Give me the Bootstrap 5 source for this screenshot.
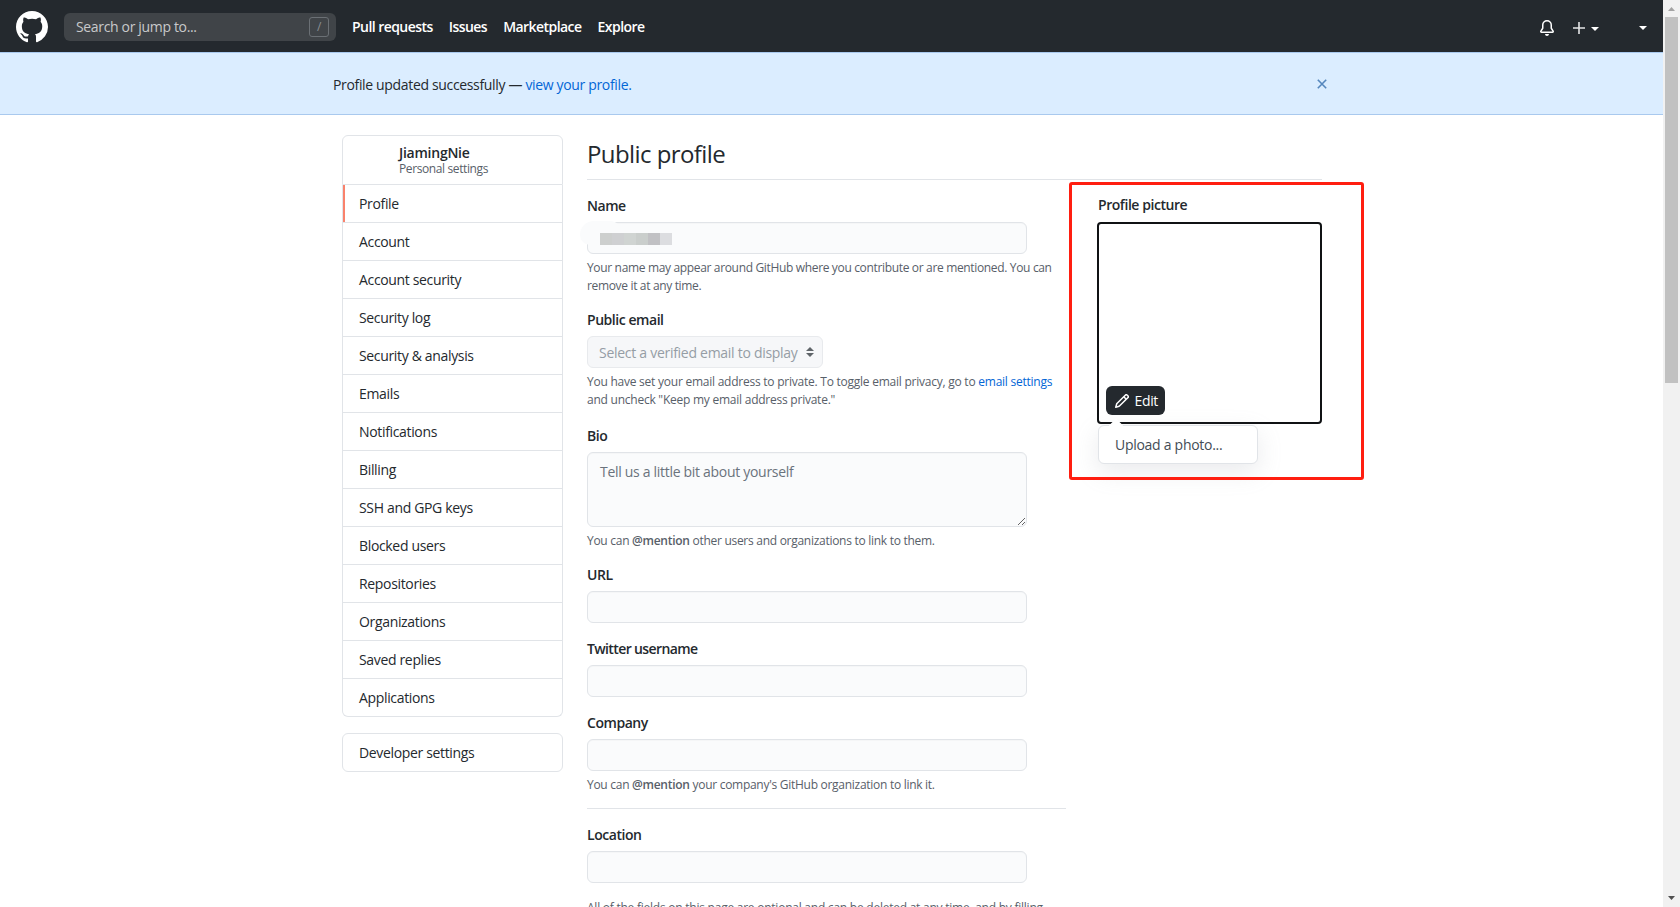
<!DOCTYPE html>
<html lang="en">
<head>
<meta charset="utf-8">
<meta name="viewport" content="width=device-width, initial-scale=1">
<title>Your Profile</title>
<link href="https://cdn.jsdelivr.net/npm/bootstrap@5.3.0/dist/css/bootstrap.min.css" rel="stylesheet">
<style>
  body { font-family: "Open Sans", "Noto Sans", sans-serif; font-size: 14px; line-height: 21px; color: #24292e; height: 100vh; letter-spacing: -.34px; }
  svg { display: block; }
  a { text-decoration: none; color: #0366d6; }
  .viewport { width: 1663px; height: 100vh; }
  .topbar { background: #24292e; height: 52px; padding: 0 16px; }
  .logo { margin-top: 2px; }
  .search-box { width: 272px; height: 28px; margin: 2px 16px 0; padding: 0 7px 0 12px; background: #404448; border-radius: 6px; color: #c8c9cb; }
  .search-box .prompt-text { margin-top: -2px; }
  .slash-key { width: 20px; height: 20px; border: 1px solid #6b7075; border-radius: 3px; color: #8b8f93; font-size: 12px; line-height: 18px; }
  .topbar .nav-link { color: #fff; font-weight: 600; padding: 0; letter-spacing: -.55px; }
  .topbar .tools { margin-top: 4px; }
  .tri { width: 0; height: 0; border: 4px solid transparent; border-bottom: 0; border-top-color: #fff; }
  .tri.create { margin: 2px 40px 0 4px; }
  .flash-note { height: 63px; background: #dbedff; border: solid #a9c9ee; border-width: 1px 0; padding: 1px 336px 0 333px; }
  .page { padding: 20px 341px 0 342px; }
  .side { width: 221px; margin-right: 24px; }
  .side .list-group { --bs-list-group-border-color: #e1e4e8; --bs-list-group-border-radius: 6px; --bs-list-group-color: #24292e; }
  .side .list-group-item { height: 38px; padding: 9px 16px 7px; line-height: 20px; }
  .side .list-group-item:first-child { height: 50px; padding: 7px 16px 0 56px; }
  .side .list-group.solo .list-group-item { height: 39px; padding: 9px 16px 7px; }
  .side .who { font-weight: 600; line-height: 20px; letter-spacing: -.25px; }
  .side .kind { font-size: 12px; line-height: 12px; color: #586069; letter-spacing: -.39px; }
  .side .current { box-shadow: inset 2px 0 #f9826c; }
  .main-title { font-size: 24px; line-height: 36px; font-weight: 400; height: 45px; padding-top: 1px; border-bottom: 1px solid #e1e4e8; letter-spacing: -.58px; }
  .fields { width: 479px; padding-top: 15px; }
  .fields .form-label, .photo .form-label { display: block; font-weight: 600; margin: 0 0 6px; letter-spacing: -.45px; }
  .fields .form-label.snug { letter-spacing: -.62px; }
  .fields .form-control { width: 440px; height: 32px; background: #fafbfc; border: 1px solid #e1e4e8; border-radius: 6px; padding: 4px 12px; font-size: 14px; line-height: 21px; letter-spacing: -.3px; box-shadow: inset 0 1px 0 rgba(225,228,232,.2); }
  .fields textarea.form-control { height: 75px; min-height: 0; padding-top: 8px; resize: vertical; }
  .fields .form-control::placeholder { color: #6a737d; opacity: 1; }
  .hint { font-size: 12px; line-height: 18px; color: #586069; margin-top: 4px; padding-top: 1px; height: 18px; white-space: nowrap; letter-spacing: -.28px; }
  .hint.two { height: 36px; }
  .hint.tight { letter-spacing: -.34px; }
  .hint.loose { letter-spacing: -.24px; }
  .field { margin-bottom: 15px; }
  .email-pick { width: 236px; height: 32px; background: #f6f7f9; border: 1px solid #e8eaed; border-radius: 6px; padding: 0 8px 0 11px; color: #959da5; }
  .email-pick span { letter-spacing: -.28px; }
  .smudge { left: -7px; top: -1px; width: 42px; height: 24px; background: #fafbfc; border-radius: 14px 12px 10px 10px; }
  .blocks { left: 13px; top: 11px; }
  .blocks i { width: 12px; height: 12px; }
  .rule { height: 1px; background: #e1e4e8; margin-bottom: 15px; }
  .photo { width: 225px; padding-top: 14px; }
  .photo .form-label { padding-left: 1px; margin-bottom: 7px; }
  .frame { height: 202px; border: 2px solid #101214; border-radius: 4px; }
  .edit-btn { left: 7px; bottom: 7px; width: 59px; height: 29px; background: #24292e; color: #fff; border-radius: 6px; padding: 0 7px 0 9px; }
  .upload-menu { left: -1px; top: 201px; width: 160px; height: 39px; background: #fff; border: 1px solid #e1e4e8; border-radius: 6px; padding: 9px 16px; line-height: 20px; color: #444d56; box-shadow: 0 8px 24px rgba(149,157,165,.2); letter-spacing: -.28px; }
  .upload-menu svg { left: 10px; top: -8px; }
  .callout-box { left: 1069px; top: 182px; width: 295px; height: 298px; border: 3px solid #ff1e10; border-radius: 3px; pointer-events: none; }
  .scroller { width: 17px; background: #f1f1f1; padding: 7px 0; }
  .scroller .thumb { width: 13px; height: 366px; margin-top: 6px; background: #c1c1c1; }
</style>
</head>
<body class="d-flex overflow-hidden position-relative bg-white">
<div class="viewport overflow-hidden flex-shrink-0">
  <header class="topbar d-flex align-items-center">
    <svg class="logo" width="32" height="32" viewBox="0 0 16 16" fill="#fff"><path fill-rule="evenodd" d="M8 0C3.58 0 0 3.58 0 8c0 3.54 2.29 6.53 5.47 7.59.4.07.55-.17.55-.38 0-.19-.01-.82-.01-1.49-2.01.37-2.53-.49-2.69-.94-.09-.23-.48-.94-.82-1.13-.28-.15-.68-.52-.01-.53.63-.01 1.08.58 1.23.82.72 1.21 1.87.87 2.33.66.07-.52.28-.87.51-1.07-1.78-.2-3.64-.89-3.64-3.95 0-.87.31-1.59.82-2.15-.08-.2-.36-1.02.08-2.12 0 0 .67-.21 2.2.82.64-.18 1.32-.27 2-.27s1.36.09 2 .27c1.53-1.04 2.2-.82 2.2-.82.44 1.1.16 1.92.08 2.12.51.56.82 1.27.82 2.15 0 3.07-1.87 3.75-3.65 3.95.29.25.54.73.54 1.48 0 1.07-.01 1.93-.01 2.2 0 .21.15.46.55.38A8.01 8.01 0 0 0 16 8c0-4.42-3.58-8-8-8z"/></svg>
    <div class="search-box d-flex align-items-center justify-content-between"><span class="prompt-text">Search or jump to...</span><span class="slash-key text-center">/</span></div>
    <nav class="nav gap-3">
      <a class="nav-link" href="#">Pull requests</a><a class="nav-link" href="#">Issues</a><a class="nav-link" href="#">Marketplace</a><a class="nav-link" href="#">Explore</a>
    </nav>
    <div class="tools d-flex align-items-center ms-auto">
      <svg width="16" height="16" viewBox="0 0 16 16" fill="#fff"><path d="M8 16a2 2 0 0 0 1.985-1.75c.017-.137-.097-.25-.235-.25h-3.5c-.138 0-.252.113-.235.25A2 2 0 0 0 8 16z"/><path fill-rule="evenodd" d="M8 1.5A3.5 3.5 0 0 0 4.500 5v2.947c0 .346-.102.683-.294.97l-1.703 2.556a.018.018 0 0 0-.003.01l.001.006c0 .002.002.004.004.006a.017.017 0 0 0 .006.004l.007.001h10.964l.007-.001a.016.016 0 0 0 .006-.004.016.016 0 0 0 .004-.006l.001-.007a.017.017 0 0 0-.003-.01l-1.703-2.554a1.75 1.75 0 0 1-.294-.97V5A3.500 3.500 0 0 0 8 1.500zM3 5a5 5 0 0 1 10 0v2.947c0 .05.015.098.042.139l1.703 2.555A1.518 1.518 0 0 1 13.482 13H2.518a1.518 1.518 0 0 1-1.263-2.360l1.703-2.554A.25.25 0 0 0 3 7.947V5z"/></svg>
      <svg class="ms-3" width="16" height="16" viewBox="0 0 16 16"><path d="M8 2v12M2 8h12" stroke="#e4e5e6" stroke-width="1.6"/></svg>
      <span class="tri create"></span>
      <span class="tri"></span>
    </div>
  </header>
  <div class="flash-note d-flex align-items-center justify-content-between">
    <span>Profile updated successfully — <a href="#">view your profile.</a></span>
    <svg width="10" height="10" viewBox="0 0 10 10"><path d="M.8.8l8.400 8.400M9.200.8L.8 9.200" stroke="#5587bd" stroke-width="1.600"/></svg>
  </div>
  <div class="page d-flex align-items-start">
    <aside class="side flex-shrink-0">
      <div class="list-group">
        <div class="list-group-item"><div class="who">JiamingNie</div><div class="kind">Personal settings</div></div>
        <a class="list-group-item current" href="#">Profile</a>
        <a class="list-group-item" href="#">Account</a>
        <a class="list-group-item" href="#">Account security</a>
        <a class="list-group-item" href="#">Security log</a>
        <a class="list-group-item" href="#">Security &amp; analysis</a>
        <a class="list-group-item" href="#">Emails</a>
        <a class="list-group-item" href="#">Notifications</a>
        <a class="list-group-item" href="#">Billing</a>
        <a class="list-group-item" href="#">SSH and GPG keys</a>
        <a class="list-group-item" href="#">Blocked users</a>
        <a class="list-group-item" href="#">Repositories</a>
        <a class="list-group-item" href="#">Organizations</a>
        <a class="list-group-item" href="#">Saved replies</a>
        <a class="list-group-item" href="#">Applications</a>
      </div>
      <div class="list-group solo mt-3"><a class="list-group-item" href="#">Developer settings</a></div>
    </aside>
    <main class="flex-grow-1">
      <h1 class="main-title mb-0">Public profile</h1>
      <div class="d-flex justify-content-between align-items-start">
        <form class="fields">
          <div class="field">
            <label class="form-label">Name</label>
            <div class="position-relative">
              <input class="form-control" type="text">
              <div class="smudge position-absolute"></div>
              <div class="blocks position-absolute d-flex">
                <i style="background:#cdcfce"></i><i style="background:#cfd0d2"></i><i style="background:#d0d4d2"></i><i style="background:#cacecc"></i><i style="background:#c1c1c4"></i><i style="background:#dcdde0"></i>
              </div>
            </div>
            <div class="hint two tight">Your name may appear around GitHub where you contribute or are mentioned. You can<br>remove it at any time.</div>
          </div>
          <div class="field" style="margin-bottom:17px">
            <label class="form-label">Public email</label>
            <div class="email-pick d-flex align-items-center justify-content-between"><span>Select a verified email to display</span>
              <svg width="8" height="10" viewBox="0 0 8 10" fill="#5f6469"><path d="M4 0l4 4H0zM4 10l4-4H0z"/></svg></div>
            <div class="hint two loose">You have set your email address to private. To toggle email privacy, go to <a href="#">email settings</a><br>and uncheck "Keep my email address private."</div>
          </div>
          <div class="field">
            <label class="form-label">Bio</label>
            <textarea class="form-control" placeholder="Tell us a little bit about yourself"></textarea>
            <div class="hint">You can <strong class="fw-semibold">@mention</strong> other users and organizations to link to them.</div>
          </div>
          <div class="field"><label class="form-label">URL</label><input class="form-control" type="text"></div>
          <div class="field"><label class="form-label snug">Twitter username</label><input class="form-control" type="text"></div>
          <div class="field">
            <label class="form-label">Company</label><input class="form-control" type="text">
            <div class="hint">You can <strong class="fw-semibold">@mention</strong> your company's GitHub organization to link it.</div>
          </div>
          <div class="rule"></div>
          <div class="field"><label class="form-label">Location</label><input class="form-control" type="text"></div>
          <div class="hint loose mt-0">All of the fields on this page are optional and can be deleted at any time, and by filling</div>
        </form>
        <section class="photo">
          <label class="form-label">Profile picture</label>
          <div class="frame position-relative">
            <div class="edit-btn position-absolute d-flex align-items-center justify-content-between">
              <svg width="14" height="14" viewBox="1 1 14 14" fill="#fff"><path fill-rule="evenodd" d="M11.013 1.427a1.750 1.750 0 0 1 2.474 0l1.086 1.086a1.750 1.750 0 0 1 0 2.474l-8.610 8.610c-.21.21-.47.364-.756.445l-3.251.930a.750.750 0 0 1-.927-.928l.929-3.250a1.750 1.750 0 0 1 .445-.758l8.610-8.610zm1.414 1.060a.250.250 0 0 0-.354 0L10.811 3.750l1.439 1.440 1.263-1.263a.250.250 0 0 0 0-.354l-1.086-1.086zM11.189 6.250L9.750 4.810l-6.286 6.287a.250.250 0 0 0-.064.108l-.558 1.953 1.953-.558a.249.249 0 0 0 .108-.064l6.286-6.286z"/></svg>
              <span>Edit</span>
            </div>
            <div class="upload-menu position-absolute">
              <svg class="position-absolute" width="14" height="9" viewBox="0 0 14 9"><path d="M0 9V7.500L7 .5l7 7V9z" fill="#fff"/></svg>
              Upload a photo...
            </div>
          </div>
        </section>
      </div>
    </main>
  </div>
</div>
<div class="scroller d-flex flex-column align-items-center flex-shrink-0">
  <svg width="7" height="4" viewBox="0 0 7 4"><path d="M0 4h7L3.500 0z" fill="#a3a3a3"/></svg>
  <div class="thumb"></div>
  <svg class="mt-auto" width="7" height="4" viewBox="0 0 7 4"><path d="M0 0h7L3.500 4z" fill="#505050"/></svg>
</div>
<div class="callout-box position-absolute"></div>
<script src="https://cdn.jsdelivr.net/npm/bootstrap@5.3.0/dist/js/bootstrap.bundle.min.js"></script>
</body>
</html>
